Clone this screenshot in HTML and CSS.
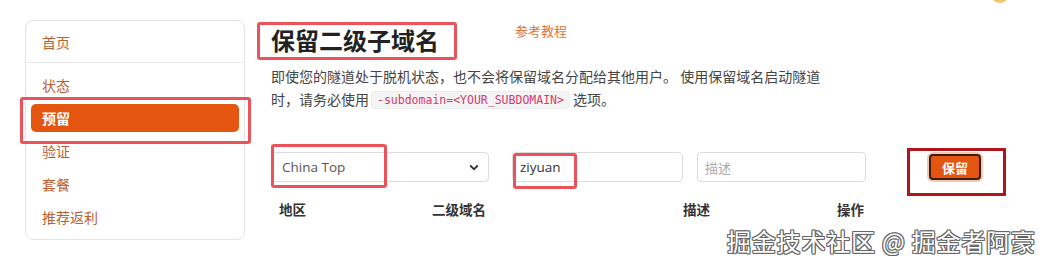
FILE: index.html
```html
<!DOCTYPE html>
<html lang="zh-CN">
<head>
<meta charset="utf-8">
<title>保留二级子域名</title>
<link rel="stylesheet" href="styles.css">
</head>
<body>
<div class="corner-dot"></div>
<div class="page">
  <nav class="sidebar">
    <div class="side-head"><a class="side-link">首页</a></div>
    <ul class="side-list">
      <li><a class="side-link">状态</a></li>
      <li><a class="side-link active">预留</a></li>
      <li><a class="side-link">验证</a></li>
      <li><a class="side-link">套餐</a></li>
      <li><a class="side-link">推荐返利</a></li>
    </ul>
    <div class="mark mark-side"></div>
  </nav>
  <main class="main">
    <div class="title-row">
      <h1 class="title">保留二级子域名<span class="mark mark-title"></span></h1>
      <a class="ref-link">参考教程</a>
    </div>
    <p class="desc"><span>即使您的隧道处于脱机状态，也不会将保留域名分配给其他用户。 使用保留域名启动隧道</span><span>时，请务必使用</span><code class="chip">-subdomain=&lt;YOUR_SUBDOMAIN&gt;</code><span>选项。</span></p>
    <div class="form-row">
      <div class="select-wrap">
        <div class="select"><span>China Top</span>
          <svg class="chev" width="10" height="7" viewBox="0 0 10 7"><path d="M1.2 1.5 L5 5.2 L8.8 1.5" fill="none" stroke="#333" stroke-width="1.8"/></svg>
        </div>
        <span class="mark mark-select"></span>
      </div>
      <div class="input-wrap sub">
        <div class="input">ziyuan</div>
        <span class="mark mark-sub"></span>
      </div>
      <div class="input desc-in placeholder">描述</div>
      <div class="btn-wrap">
        <button class="btn">保留</button>
        <span class="mark-dark"></span>
      </div>
    </div>
    <div class="head-row">
      <span class="h h1">地区</span>
      <span class="h h2">二级域名</span>
      <span class="h h3">描述</span>
      <span class="h h4">操作</span>
    </div>
  </main>
</div>
<div class="watermark">掘金技术社区 @ 掘金者阿豪</div>
</body>
</html>
```

FILE: styles.css
```css
* { box-sizing: border-box; }
html, body { margin: 0; padding: 0; background: #fff; }
body {
  width: 1050px; height: 266px; overflow: hidden; position: relative;
  font-family: "Noto Sans CJK SC", "Noto Sans", sans-serif;
  font-size: 14px; color: #444;
}
.corner-dot {
  position: absolute; left: 990px; top: -17px; width: 20px; height: 20px;
  border-radius: 50%; background: #f3c471;
}
.page { display: flex; padding: 20px 0 0 25px; }
.sidebar {
  position: relative; width: 220px; height: 220px;
  border: 1px solid #e3e3e3; border-radius: 8px; flex: none;
}
.side-head { height: 42px; border-bottom: 1px solid #e6e6e6; display: flex; align-items: center; padding: 0 0 0 16px; }
.side-list { list-style: none; margin: 0; padding: 8px 5px 0 5px; }
.side-list li { margin-bottom: 5px; }
.side-link { display: block; color: #b95f33; line-height: 28px; font-size: 14px; }
.side-list .side-link { padding-left: 11px; height: 28px; border-radius: 5px; }
.side-link.active { background: #e4560f; color: #fff; font-weight: 700; }
.mark { position: absolute; border: 3px solid #ec525a; border-radius: 3px; pointer-events: none; }
.mark-side { left: -6px; top: 76px; width: 231px; height: 47px; }

.main { margin-left: 26px; margin-top: 5px; flex: 1; }
.title-row { display: flex; align-items: flex-start; }
.title {
  position: relative; margin: 0; font-size: 24px; line-height: 30px; font-weight: 700; color: #222;
}
.mark-title { left: -14px; top: -3px; width: 200px; height: 38px; }
.ref-link { margin-left: 76px; margin-top: -3px; font-size: 13px; line-height: 18px; color: #e0743a; }
.desc { margin: 10px 0 0 0; width: 560px; font-size: 14px; line-height: 23px; color: #444; }
.chip {
  display: inline-block; vertical-align: 1px; line-height: 16px;
  font-family: "DejaVu Sans Mono", "Liberation Mono", monospace; font-size: 11.5px;
  color: #d63a6c; background: #f4f4f4; border: 1px solid #ececec; border-radius: 4px;
  padding: 0 5px; margin: 0 3px 0 2px;
}
.form-row { display: flex; align-items: center; margin-top: 41px; height: 30px; }
.select-wrap, .input-wrap, .btn-wrap { position: relative; }
.select {
  margin-left: 1px; width: 217px; height: 30px; border: 1px solid #dcdcdc; border-radius: 4px;
  display: flex; align-items: center; justify-content: space-between; padding: 0 9px 0 9px;
  font-family: "Open Sans", "Noto Sans", sans-serif; font-size: 13.5px; color: #555;
}
.mark-select { left: 0; top: -8px; width: 116px; height: 44px; }
.input {
  height: 30px; border: 1px solid #dcdcdc; border-radius: 4px; display: flex; align-items: center;
  padding: 0 7px; font-family: "Open Sans", "Noto Sans", sans-serif; font-size: 13.5px; color: #333;
}
.sub { margin-left: 23px; }
.sub .input { width: 171px; }
.mark-sub { left: 1px; top: 1px; width: 64px; height: 36px; }
.desc-in { margin-left: 14px; width: 169px; }
.placeholder { color: #aaa; font-family: "Noto Sans CJK SC", sans-serif; font-size: 13px; }
.btn-wrap { margin-left: 63px; }
.btn {
  width: 52px; height: 26px; background: #e4560f; color: #fff; font-weight: 700;
  font-family: "Noto Sans CJK SC", sans-serif; font-size: 13px;
  border: 2px solid #3b1d12; border-radius: 4px; box-shadow: 0 0 0 2px #f2c7b3; padding: 0;
}
.mark-dark {
  position: absolute; left: -22px; top: -6px; width: 99px; height: 48px;
  border: 3px solid #b0141c;
}
.head-row { display: flex; margin-top: 17px; padding-left: 8px; line-height: 20px; }
.h { font-weight: 700; font-size: 13.5px; color: #333; }
.h1 { width: 153px; }
.h2 { width: 251px; }
.h3 { width: 154px; }
.watermark {
  position: absolute; left: 727px; top: 225px; font-size: 24px; line-height: 32px; color: #fff;
  font-family: "Noto Sans CJK SC", sans-serif; letter-spacing: 0.8px;
  text-shadow: 1px 0 0 #666, -1px 0 0 #666, 0 1px 0 #666, 0 -1px 0 #666, 1px 1px 0 #666, -1px -1px 0 #666, 1px -1px 0 #666, -1px 1px 0 #666;
}
```
